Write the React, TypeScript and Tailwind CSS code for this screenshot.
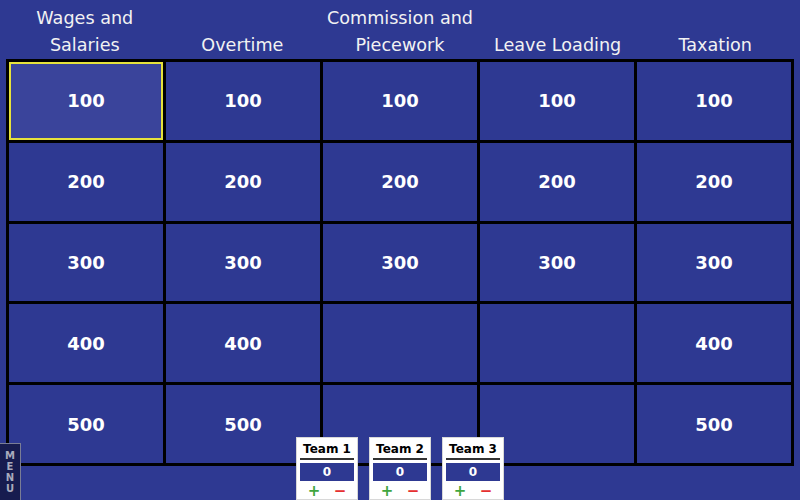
import React from "react";

const headers = ["Wages and Salaries", "Overtime", "Commission and Piecework", "Leave Loading", "Taxation"];
const values = [100, 200, 300, 400, 500];
const empty: Record<string, boolean> = { "3-2": true, "3-3": true, "4-2": true, "4-3": true };

function TeamCard({ name }: { name: string }) {
  return (
    <div className="w-[62px] h-[63px] bg-white border border-[#d8d8d8] flex flex-col items-center px-[3px] pt-[4px]">
      <div className="w-full text-center text-[12px] leading-[15px] font-bold text-black pb-[1px] border-b-2 border-[#333]">
        {name}
      </div>
      <div className="mt-[3px] w-full h-[18px] bg-[#2e3992] text-white text-[12px] font-bold flex items-center justify-center">
        0
      </div>
      <div className="w-full flex justify-around px-[1px] mt-[1px] text-[15px] leading-[18px] font-bold">
        <span className="text-[#3fa63f]">+</span>
        <span className="text-[#e53030]">−</span>
      </div>
    </div>
  );
}

export default function App() {
  return (
    <div
      className="relative w-[800px] h-[500px] bg-[#2e3992] overflow-hidden"
      style={{ fontFamily: '"DejaVu Sans", Verdana, sans-serif' }}
    >
      <div className="grid grid-cols-5 h-[59px] px-[6px] items-end">
        {headers.map((h) => (
          <div key={h} className="text-center text-[#f2f2f2] text-[17.6px] leading-[27px] px-[2px]">
            {h}
          </div>
        ))}
      </div>
      <div className="ml-[6px] w-[788px] h-[407px] bg-black p-[3px] grid grid-cols-5 grid-rows-5 gap-[3px]">
        {values.map((v, r) =>
          headers.map((_, c) => {
            const key = `${r}-${c}`;
            const sel = r === 0 && c === 0;
            return (
              <div
                key={key}
                className={
                  sel
                    ? "bg-[#3a449b] border-2 border-[#e6e23c] flex items-center justify-center text-white font-bold text-[18px]"
                    : "bg-[#2e3992] flex items-center justify-center text-white font-bold text-[18px]"
                }
              >
                {empty[key] ? "" : v}
              </div>
            );
          })
        )}
      </div>

      <div className="absolute left-0 bottom-0 w-[21px] h-[57px] bg-[#171c4f] border-t border-r border-[#7a7d95] flex flex-col items-center pt-[6px] text-[10px] leading-[11px] font-bold text-[#a9abbd]">
        <span>M</span>
        <span>E</span>
        <span>N</span>
        <span>U</span>
      </div>

      <div className="absolute bottom-0 left-0 right-0 flex justify-center gap-[11px]" style={{ top: 437 }}>
        <TeamCard name="Team 1" />
        <TeamCard name="Team 2" />
        <TeamCard name="Team 3" />
      </div>
    </div>
  );
}
